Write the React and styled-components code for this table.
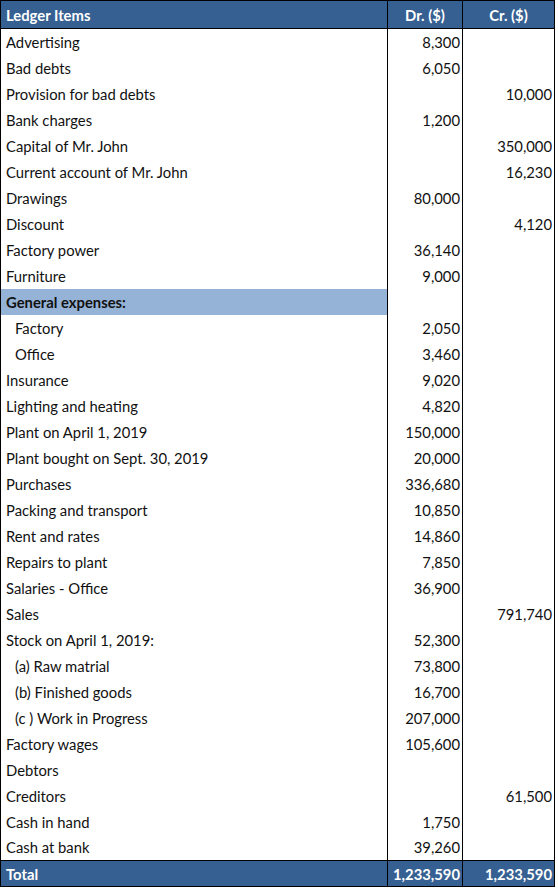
import React from 'react';
import styled, { createGlobalStyle } from 'styled-components';

const GlobalStyle = createGlobalStyle`
  body {
    margin: 0;
    background: #ffffff;
  }
`;

const rows = [
  { label: 'Advertising', dr: '8,300' },
  { label: 'Bad debts', dr: '6,050' },
  { label: 'Provision for bad debts', cr: '10,000' },
  { label: 'Bank charges', dr: '1,200' },
  { label: 'Capital of Mr. John', cr: '350,000' },
  { label: 'Current account of Mr. John', cr: '16,230' },
  { label: 'Drawings', dr: '80,000' },
  { label: 'Discount', cr: '4,120' },
  { label: 'Factory power', dr: '36,140' },
  { label: 'Furniture', dr: '9,000' },
  { label: 'General expenses:', section: true },
  { label: 'Factory', dr: '2,050', indent: true },
  { label: 'Office', dr: '3,460', indent: true },
  { label: 'Insurance', dr: '9,020' },
  { label: 'Lighting and heating', dr: '4,820' },
  { label: 'Plant on April 1, 2019', dr: '150,000' },
  { label: 'Plant bought on Sept. 30, 2019', dr: '20,000' },
  { label: 'Purchases', dr: '336,680' },
  { label: 'Packing and transport', dr: '10,850' },
  { label: 'Rent and rates', dr: '14,860' },
  { label: 'Repairs to plant', dr: '7,850' },
  { label: 'Salaries - Office', dr: '36,900' },
  { label: 'Sales', cr: '791,740' },
  { label: 'Stock on April 1, 2019:', dr: '52,300' },
  { label: '(a) Raw matrial', dr: '73,800', indent: true },
  { label: '(b) Finished goods', dr: '16,700', indent: true },
  { label: '(c ) Work in Progress', dr: '207,000', indent: true },
  { label: 'Factory wages', dr: '105,600' },
  { label: 'Debtors' },
  { label: 'Creditors', cr: '61,500' },
  { label: 'Cash in hand', dr: '1,750' },
  { label: 'Cash at bank', dr: '39,260' },
];

const Sheet = styled.table`
  border-collapse: collapse;
  table-layout: fixed;
  width: 554px;
  border: 1px solid #000;
  font-family: Lato, 'Liberation Sans', sans-serif;
  font-size: 14.8px;
  color: #111;
`;

const HeadRow = styled.tr`
  height: 28px;
  background: #366092;
  color: #fff;
  font-weight: bold;
  border-bottom: 1px solid #000;
`;

const TotalRow = styled(HeadRow)`
  height: 26px;
  border-top: 1px solid #000;
  border-bottom: none;
`;

const Row = styled.tr`
  height: 26px;
`;

const Cell = styled.td`
  padding: 0 ${p => (p.$align === 'right' ? '2px' : '5px')} 0 ${p => (p.$indent ? '14px' : '5px')};
  text-align: ${p => p.$align || 'left'};
  border-right: 1px solid #000;
  white-space: nowrap;
  overflow: hidden;
  background: ${p => (p.$section ? '#95b3d7' : 'transparent')};
  font-weight: ${p => (p.$section ? 'bold' : 'inherit')};
`;

const HeadCell = styled.th`
  padding: 0 5px;
  text-align: ${p => p.$align || 'left'};
  border-right: 1px solid #000;
  font-weight: bold;
`;

export default function App() {
  return (
    <>
      <GlobalStyle />
      <Sheet>
        <colgroup>
          <col style={{ width: 387 }} />
          <col style={{ width: 75 }} />
          <col style={{ width: 92 }} />
        </colgroup>
        <thead>
          <HeadRow>
            <HeadCell>Ledger Items</HeadCell>
            <HeadCell $align="center">Dr. ($)</HeadCell>
            <HeadCell $align="center">Cr. ($)</HeadCell>
          </HeadRow>
        </thead>
        <tbody>
          {rows.map(r => (
            <Row key={r.label}>
              <Cell $indent={r.indent} $section={r.section}>{r.label}</Cell>
              <Cell $align="right">{r.dr}</Cell>
              <Cell $align="right">{r.cr}</Cell>
            </Row>
          ))}
          <TotalRow>
            <Cell>Total</Cell>
            <Cell $align="right">1,233,590</Cell>
            <Cell $align="right">1,233,590</Cell>
          </TotalRow>
        </tbody>
      </Sheet>
    </>
  );
}
